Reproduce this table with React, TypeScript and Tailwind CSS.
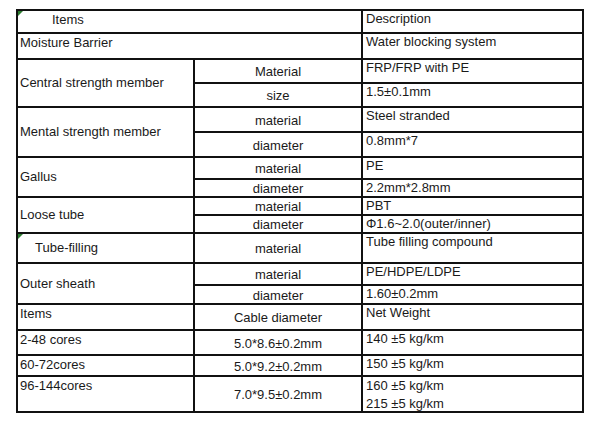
import React from "react"

type Cell = {
  text: React.ReactNode
  kind: "left" | "mid" | "right"
  span?: string
  top?: boolean
  pad?: string
  tick?: boolean
}

const cells: Cell[] = [
  { text: "Items", kind: "left", span: "col-span-2", pad: "pl-[34px]", top: true, tick: true },
  { text: "Description", kind: "right" },
  { text: "Moisture Barrier", kind: "left", span: "col-span-2", top: true },
  { text: "Water blocking system", kind: "right" },
  { text: "Central strength member", kind: "left", span: "row-span-2" },
  { text: "Material", kind: "mid" },
  { text: "FRP/FRP with PE", kind: "right" },
  { text: "size", kind: "mid" },
  { text: "1.5±0.1mm", kind: "right" },
  { text: "Mental strength member", kind: "left", span: "row-span-2" },
  { text: "material", kind: "mid" },
  { text: "Steel stranded", kind: "right" },
  { text: "diameter", kind: "mid" },
  { text: "0.8mm*7", kind: "right" },
  { text: "Gallus", kind: "left", span: "row-span-2" },
  { text: "material", kind: "mid" },
  { text: "PE", kind: "right" },
  { text: "diameter", kind: "mid" },
  { text: "2.2mm*2.8mm", kind: "right" },
  { text: "Loose tube", kind: "left", span: "row-span-2" },
  { text: "material", kind: "mid" },
  { text: "PBT", kind: "right" },
  { text: "diameter", kind: "mid" },
  { text: "Φ1.6~2.0(outer/inner)", kind: "right" },
  { text: "Tube-filling", kind: "left", pad: "pl-[17px]", tick: true },
  { text: "material", kind: "mid" },
  { text: "Tube filling compound", kind: "right" },
  { text: "Outer sheath", kind: "left", span: "row-span-2" },
  { text: "material", kind: "mid" },
  { text: "PE/HDPE/LDPE", kind: "right" },
  { text: "diameter", kind: "mid" },
  { text: "1.60±0.2mm", kind: "right" },
  { text: "Items", kind: "left", top: true },
  { text: "Cable diameter", kind: "mid" },
  { text: "Net Weight", kind: "right" },
  { text: "2-48 cores", kind: "left", top: true },
  { text: "5.0*8.6±0.2mm", kind: "mid" },
  { text: "140 ±5 kg/km", kind: "right" },
  { text: "60-72cores", kind: "left", top: true },
  { text: "5.0*9.2±0.2mm", kind: "mid" },
  { text: "150 ±5 kg/km", kind: "right" },
  { text: "96-144cores", kind: "left", top: true },
  { text: "7.0*9.5±0.2mm", kind: "mid" },
  {
    text: (
      <>
        <div className="leading-[18px]">160 ±5 kg/km</div>
        <div className="leading-[18px]">215 ±5 kg/km</div>
      </>
    ),
    kind: "right",
  },
]

function TableCell({ cell }: { cell: Cell }) {
  let cls = "relative bg-white flex overflow-hidden whitespace-nowrap "
  if (cell.kind === "mid") {
    cls += "items-center justify-center pt-[2px]"
  } else if (cell.kind === "right") {
    cls += "flex-col items-start justify-start pl-[3px] leading-[16px]"
  } else {
    cls += (cell.top ? "items-start pt-[1px] " : "items-center ") + (cell.pad ?? "pl-[2px]")
  }
  if (cell.span) cls += " " + cell.span

  return (
    <div className={cls}>
      {cell.tick && (
        <span className="absolute left-0 top-0 w-0 h-0 border-t-[5px] border-r-[5px] border-t-[#2e7d32] border-r-transparent" />
      )}
      {cell.text}
    </div>
  )
}

export default function App() {
  return (
    <div className="w-[600px] h-[424px] bg-white overflow-hidden" style={{ fontFamily: '"Liberation Sans", Arial, sans-serif' }}>
      <div className="ml-[16px] mt-[9px] w-[568px] bg-[#111] p-[2px] grid gap-[2px] grid-cols-[175px_166px_219px] grid-rows-[21px_24px_22px_22px_23px_23px_20px_16px_16px_16px_28px_20px_17px_24px_23px_19px_34px] text-[13px] leading-[16px] text-[#1a1a1a]">
        {cells.map((c, i) => (
          <TableCell key={i} cell={c} />
        ))}
      </div>
    </div>
  )
}
